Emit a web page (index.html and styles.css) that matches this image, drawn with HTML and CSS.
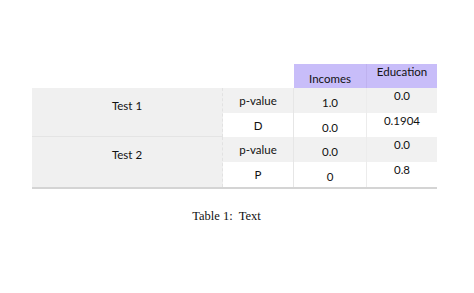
FILE: index.html
```html
<!DOCTYPE html>
<html>
<head>
<meta charset="utf-8">
<link rel="stylesheet" href="styles.css">
</head>
<body>
<div class="page">
  <div class="table">
    <div class="hd blank"></div>
    <div class="hd blank"></div>
    <div class="hd purple mid">Incomes</div>
    <div class="hd purple top">Education</div>

    <div class="test t1">Test 1</div>
    <div class="c lbl gray">p-value</div>
    <div class="c num gray">1.0</div>
    <div class="c edu gray">0.0</div>

    <div class="c lbl">D</div>
    <div class="c num">0.0</div>
    <div class="c edu">0.1904</div>

    <div class="test t2">Test 2</div>
    <div class="c lbl gray">p-value</div>
    <div class="c num gray">0.0</div>
    <div class="c edu gray">0.0</div>

    <div class="c lbl">P</div>
    <div class="c num">0</div>
    <div class="c edu">0.8</div>
  </div>
  <div class="caption">Table 1:&nbsp; Text</div>
</div>
</body>
</html>
```
FILE: styles.css
```css
html, body {
  margin: 0;
  padding: 0;
  background: #ffffff;
}
.page {
  width: 474px;
  height: 293px;
  padding-top: 64px;
  box-sizing: border-box;
}
.table {
  margin-left: 32px;
  width: 405px;
  display: grid;
  grid-template-columns: 191px 71px 72px 71px;
  grid-template-rows: 24px 25px 24px 25px 25px;
  font-family: "Lato", "DejaVu Sans", sans-serif;
  font-size: 11.5px;
  color: #111111;
  border-bottom: 2px solid #d4d4d4;
}
.hd {
  display: flex;
  justify-content: center;
}
.purple {
  background: #c8bdf9;
}
.hd.mid { align-items: center; padding-top: 4px; }
.hd.top { align-items: flex-start; padding-top: 1px; border-left: 1px solid #bfb2ef; }
.test {
  grid-column: 1;
  background: #f0f0f0;
  display: flex;
  align-items: flex-start;
  justify-content: center;
  padding-top: 11px;
  box-sizing: border-box;
  border-right: 1px dashed #e2e2e2;
}
.t1 { grid-row: 2 / span 2; border-bottom: 1px solid #e4e4e4; }
.t2 { grid-row: 4 / span 2; }
.c {
  display: flex;
  justify-content: center;
  box-sizing: border-box;
}
.gray { background: #f1f1f1; }
.lbl { align-items: center; border-right: 1px solid #e6e6e6; }
.num { align-items: center; padding-top: 4px; }
.edu { align-items: flex-start; padding-top: 1px; border-left: 1px solid #ececec; }
.caption {
  margin-top: 20px;
  width: 453px;
  text-align: center;
  font-family: "Liberation Serif", "DejaVu Serif", serif;
  font-size: 12.5px;
  color: #111111;
}
```
